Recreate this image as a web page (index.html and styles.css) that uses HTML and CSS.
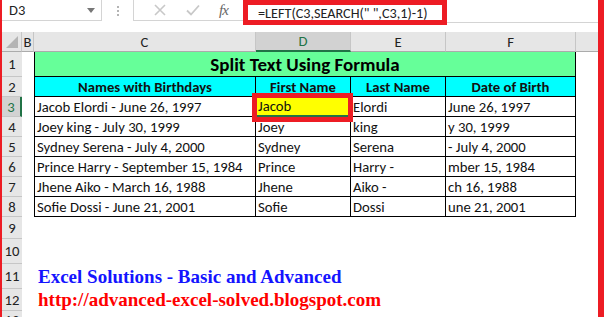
FILE: index.html
```html
<!DOCTYPE html>
<html lang="en">
<head>
  <meta charset="UTF-8">
  <title>Split Text Using Formula</title>
  <link rel="stylesheet" href="styles.css">
</head>
<body>
  <div class="window">
    <div class="formula-bar">
      <div class="name-box">
        <span>D3</span>
        <span class="caret"></span>
      </div>
      <div class="grip">
        <span></span><span></span><span></span>
      </div>
      <div class="fx-buttons">
        <svg width="14" height="14" viewBox="0 0 14 14"><path d="M2 2 L12 12 M12 2 L2 12" stroke="#c8c8c8" stroke-width="1.6" fill="none"/></svg>
        <svg width="16" height="14" viewBox="0 0 16 14"><path d="M2 7.5 L6 11.5 L14 2.5" stroke="#c8c8c8" stroke-width="1.8" fill="none"/></svg>
        <span class="fx">fx</span>
      </div>
      <div class="formula-input">=LEFT(C3,SEARCH(" ",C3,1)-1)</div>
      <div class="formula-rest"></div>
    </div>

    <div class="sheet">
      <!-- column headers -->
      <div class="corner"><span class="select-all"></span></div>
      <div class="col-head">B</div>
      <div class="col-head">C</div>
      <div class="col-head active">D</div>
      <div class="col-head">E</div>
      <div class="col-head">F</div>
      <div class="col-head last"></div>

      <!-- row 1 -->
      <div class="row-head">1</div>
      <div class="cell"></div>
      <div class="cell title">Split Text Using Formula</div>
      <div class="cell"></div>

      <!-- row 2 -->
      <div class="row-head">2</div>
      <div class="cell"></div>
      <div class="cell th first">Names with Birthdays</div>
      <div class="cell th">First Name</div>
      <div class="cell th">Last Name</div>
      <div class="cell th">Date of Birth</div>
      <div class="cell"></div>

      <!-- row 3 -->
      <div class="row-head active">3</div>
      <div class="cell"></div>
      <div class="cell td first">Jacob Elordi - June 26, 1997</div>
      <div class="cell td selected">Jacob<span class="highlight"></span></div>
      <div class="cell td">Elordi</div>
      <div class="cell td">June 26, 1997</div>
      <div class="cell"></div>

      <!-- row 4 -->
      <div class="row-head">4</div>
      <div class="cell"></div>
      <div class="cell td first">Joey king - July 30, 1999</div>
      <div class="cell td">Joey</div>
      <div class="cell td">king</div>
      <div class="cell td">y 30, 1999</div>
      <div class="cell"></div>

      <!-- row 5 -->
      <div class="row-head">5</div>
      <div class="cell"></div>
      <div class="cell td first">Sydney Serena - July 4, 2000</div>
      <div class="cell td">Sydney</div>
      <div class="cell td">Serena</div>
      <div class="cell td">- July 4, 2000</div>
      <div class="cell"></div>

      <!-- row 6 -->
      <div class="row-head">6</div>
      <div class="cell"></div>
      <div class="cell td first">Prince Harry - September 15, 1984</div>
      <div class="cell td">Prince</div>
      <div class="cell td">Harry -</div>
      <div class="cell td">mber 15, 1984</div>
      <div class="cell"></div>

      <!-- row 7 -->
      <div class="row-head">7</div>
      <div class="cell"></div>
      <div class="cell td first">Jhene Aiko - March 16, 1988</div>
      <div class="cell td">Jhene</div>
      <div class="cell td">Aiko -</div>
      <div class="cell td">ch 16, 1988</div>
      <div class="cell"></div>

      <!-- row 8 -->
      <div class="row-head">8</div>
      <div class="cell"></div>
      <div class="cell td first">Sofie Dossi - June 21, 2001</div>
      <div class="cell td">Sofie</div>
      <div class="cell td">Dossi</div>
      <div class="cell td">une 21, 2001</div>
      <div class="cell"></div>

      <!-- rows 9-13 -->
      <div class="row-head">9</div>
      <div class="cell wide"></div>

      <div class="row-head">10</div>
      <div class="cell wide"></div>

      <div class="row-head">11</div>
      <div class="cell"></div>
      <div class="cell note blue">Excel Solutions - Basic and Advanced</div>

      <div class="row-head">12</div>
      <div class="cell"></div>
      <div class="cell note red">http://advanced-excel-solved.blogspot.com</div>

      <div class="row-head">13</div>
      <div class="cell wide"></div>
    </div>
  </div>
</body>
</html>
```

FILE: styles.css
```css
:root {
  --frame-red: #ed1c24;
  --head-bg: #e6e6e6;
  --head-active: #d2d2d2;
  --head-line: #c6c6c6;
  --excel-green: #217346;
  --title-green: #66ff99;
  --header-cyan: #00ffff;
  --cell-font: Carlito, "Liberation Sans", Arial, sans-serif;
}

* {
  margin: 0;
  padding: 0;
  box-sizing: border-box;
}

body {
  width: 604px;
  height: 317px;
  overflow: hidden;
  background: #fff;
  font-family: var(--cell-font);
}

.window {
  height: 317px;
  border-left: 2px solid var(--frame-red);
  border-right: 6px solid var(--frame-red);
  display: flex;
  flex-direction: column;
}

/* formula bar */
.formula-bar {
  display: flex;
  height: 25px;
  margin-bottom: 7px;
  background: #fff;
}

.name-box {
  width: 100px;
  height: 21px;
  border-right: 1px solid #d4d4d4;
  border-bottom: 1px solid #d4d4d4;
  display: flex;
  align-items: center;
  justify-content: space-between;
  padding: 0 6px 0 7px;
  font-size: 14.5px;
  color: #222;
}

.caret {
  width: 0;
  height: 0;
  border-left: 4px solid transparent;
  border-right: 4px solid transparent;
  border-top: 5px solid #777;
}

.grip {
  width: 31px;
  height: 21px;
  display: flex;
  flex-direction: column;
  align-items: center;
  justify-content: center;
  gap: 2px;
}

.grip span {
  width: 2px;
  height: 2px;
  background: #b4b4b4;
}

.fx-buttons {
  width: 110px;
  height: 21px;
  border-left: 1px solid #d4d4d4;
  border-bottom: 1px solid #d4d4d4;
  display: flex;
  align-items: center;
  justify-content: space-around;
  padding: 0 6px 0 10px;
}

.fx {
  font-family: "Liberation Serif", serif;
  font-style: italic;
  font-size: 15px;
  color: #666;
  letter-spacing: -1px;
}

.formula-input {
  width: 204px;
  height: 25px;
  border: 5px solid var(--frame-red);
  display: flex;
  align-items: center;
  padding-left: 10px;
  font-size: 14.2px;
  color: #222;
  white-space: pre;
}

.formula-rest {
  flex: 1;
  height: 23px;
  border-bottom: 1px solid #d4d4d4;
}

/* sheet grid */
.sheet {
  display: grid;
  grid-template-columns: 20px 12px 222px 95px 95px 130px 1fr;
  grid-template-rows: 20px 25px repeat(7, 20px) 22px 25px 25px 1fr;
}

.corner {
  background: var(--head-bg);
  border-right: 1px solid var(--head-line);
  border-bottom: 1px solid #ababab;
  position: relative;
}

.select-all {
  position: absolute;
  right: 3px;
  bottom: 3px;
  width: 0;
  height: 0;
  border-left: 12px solid transparent;
  border-bottom: 12px solid #b4b4b4;
}

.col-head {
  background: var(--head-bg);
  border-right: 1px solid var(--head-line);
  border-bottom: 1px solid #ababab;
  display: flex;
  align-items: center;
  justify-content: center;
  font-size: 14.7px;
  color: #222;
}

.col-head.active {
  background: var(--head-active);
  border-bottom: 2px solid var(--excel-green);
  color: var(--excel-green);
}

.col-head.last {
  border-right: none;
}

.row-head {
  grid-column: 1;
  background: var(--head-bg);
  border-bottom: 1px solid var(--head-line);
  display: flex;
  align-items: center;
  justify-content: center;
  font-size: 14.7px;
  color: #222;
}

.row-head.active {
  background: var(--head-active);
  border-right: 2px solid var(--excel-green);
  color: var(--excel-green);
}

.cell {
  background: #fff;
  font-size: 14.7px;
  white-space: nowrap;
  overflow: visible;
}

.cell.wide {
  grid-column: 2 / 8;
}

.cell.title {
  grid-column: 3 / 7;
  background: var(--title-green);
  border: 1px solid #000;
  border-top: none;
  font-weight: bold;
  font-size: 19px;
  display: flex;
  align-items: center;
  justify-content: center;
}

.cell.th,
.cell.td {
  border-right: 1px solid #000;
  border-bottom: 1px solid #000;
  display: flex;
  align-items: center;
  padding-left: 2px;
  color: #111;
}

.cell.th {
  background: var(--header-cyan);
  font-weight: bold;
  justify-content: center;
  padding-left: 0;
}

.cell.first {
  border-left: 1px solid #000;
}

.cell.selected {
  background: #ffff00;
  position: relative;
  border-bottom: 2px solid var(--excel-green);
}

.highlight {
  position: absolute;
  left: -4px;
  top: -4px;
  right: -3px;
  bottom: -7px;
  border: 5px solid var(--frame-red);
}

.cell.note {
  grid-column: 3 / 8;
  font-family: "Liberation Serif", "Times New Roman", serif;
  font-weight: bold;
  font-size: 19px;
  display: flex;
  align-items: center;
  padding-left: 4px;
}

.cell.note.blue {
  color: #1414ff;
}

.cell.note.red {
  color: #ff0000;
}
```
